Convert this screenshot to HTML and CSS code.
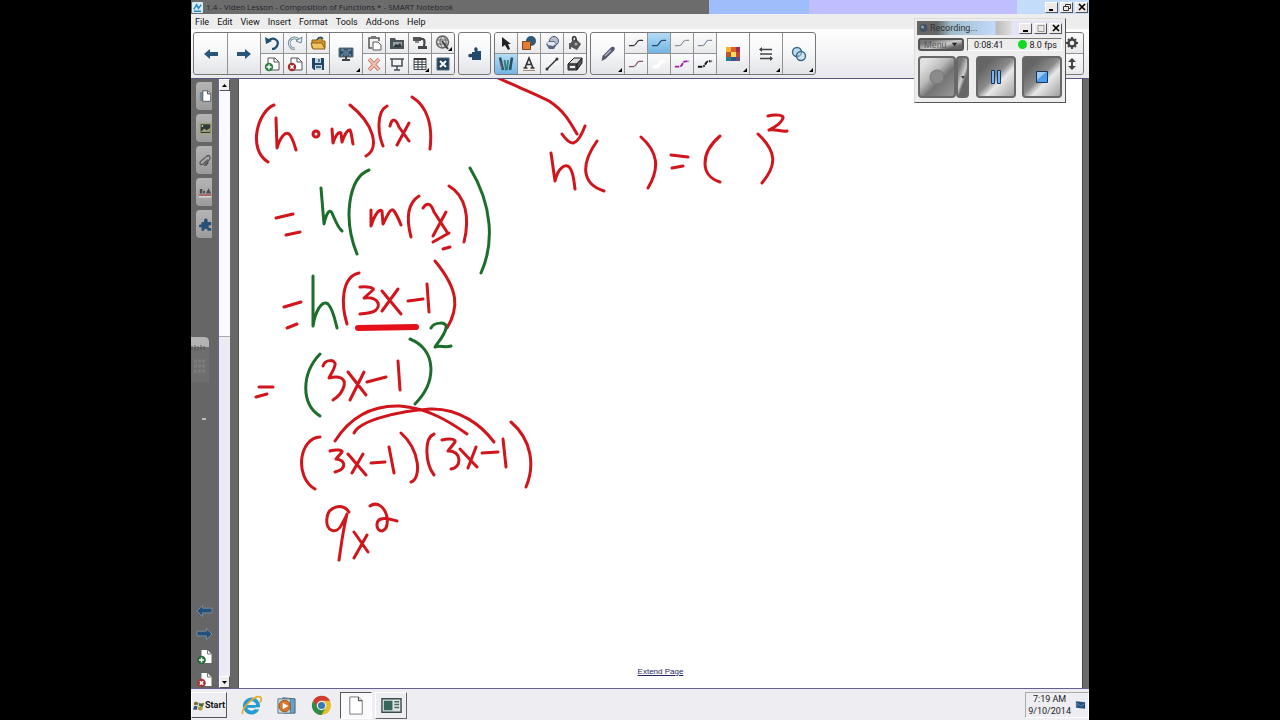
FILE: index.html
```html
<!DOCTYPE html>
<html lang="en">
<head>
<meta charset="utf-8">
<title>1.4 - Video Lesson - Composition of Functions</title>
<link rel="stylesheet" href="styles.css">
</head>
<body>
<div class="desktop">
  <header class="titlebar">
    <svg class="app-icon" viewBox="0 0 12 12"><rect width="12" height="12" rx="1" fill="#d9edf7"/><path d="M2 8l3-5 2 4 3-4M2 10h8" stroke="#2588b8" stroke-width="1.6" fill="none"/></svg>
    <span class="title-text">1.4 - Video Lesson - Composition of Functions * - SMART Notebook</span>
    <div class="win-buttons">
      <button class="win-btn" aria-label="Minimize"><svg viewBox="0 0 12 11"><path d="M3 8h4" stroke="#000" stroke-width="2"/></svg></button>
      <button class="win-btn" aria-label="Restore"><svg viewBox="0 0 12 11"><path d="M4.5 4V2.500h5v4H8M2.500 4.500h5v4h-5z" stroke="#333" fill="none"/></svg></button>
      <button class="win-btn" aria-label="Close"><svg viewBox="0 0 12 11"><path d="M3 2l6 6M9 2L3 8" stroke="#000" stroke-width="1.700"/></svg></button>
    </div>
  </header>

  <nav class="menubar">
    <button>File</button><button>Edit</button><button>View</button><button>Insert</button><button>Format</button><button>Tools</button><button>Add-ons</button><button>Help</button>
  </nav>

  <div class="toolbar">
    <div class="group">
      <button class="big" aria-label="Previous page"><svg viewBox="0 0 16 16"><path d="M1 8l6-5v3h8v4H7v3z" fill="#2b567a"/></svg></button>
      <button class="big" aria-label="Next page"><svg viewBox="0 0 16 16"><path d="M15 8L9 3v3H1v4h8v3z" fill="#2b567a"/></svg></button>
      <div class="cells cols3">
        <button aria-label="Undo"><svg viewBox="0 0 16 16"><path d="M1 2l1 7 6-3z" fill="#1f4e70"/><path d="M4 6c5-5 12-1 9 5-1 2-3 3-5 3" stroke="#1f4e70" stroke-width="2.200" fill="none"/></svg></button>
        <button aria-label="Redo"><svg viewBox="0 0 16 16"><path d="M12 5C7 0 0 5 3 11c1 2 3 3 5 3" stroke="#6b8695" stroke-width="2.600" fill="none"/><path d="M12 5C7 0 0 5 3 11c1 2 3 3 5 3" stroke="#eef4f7" fill="none"/><path d="M15 2l-1 6-5-2z" fill="#eef4f7" stroke="#6b8695"/></svg></button>
        <button aria-label="Open"><svg viewBox="0 0 16 16"><path d="M2 13V5h5l1-2h4v3h3v7z" fill="#d49a29" stroke="#87611f"/><path d="M1 8h11l3 6H3z" fill="#f0c45b" stroke="#87611f"/><path d="M7 5c2-4 5-3 6-1" stroke="#26516e" stroke-width="1.500" fill="none"/></svg></button>
        <button aria-label="Add page"><svg viewBox="0 0 16 16"><path d="M4 2h7l4 4v8H4z" fill="#fff" stroke="#555"/><path d="M10 2v4h5" fill="none" stroke="#555"/><circle cx="5" cy="11" r="4.200" fill="#2f7d42"/><path d="M5 8.500v5M2.500 11h5" stroke="#fff" stroke-width="1.400"/></svg></button>
        <button aria-label="Delete page"><svg viewBox="0 0 16 16"><path d="M4 2h7l4 4v8H4z" fill="#fff" stroke="#555"/><path d="M10 2v4h5" fill="none" stroke="#555"/><circle cx="5" cy="11" r="4.200" fill="#a02c2c"/><path d="M3.300 9.300l3.400 3.400m0-3.400l-3.400 3.400" stroke="#fff" stroke-width="1.300"/></svg></button>
        <button aria-label="Save"><svg viewBox="0 0 16 16"><path d="M2 2h12v12H4l-2-2z" fill="#1f4666"/><path d="M5 2h6v5H5zM5 9h7v5H5z" fill="#c6d5df"/><path d="M9 3v3M6 11h5" stroke="#1f4666" stroke-width="1.300"/></svg></button>
      </div>
      <button class="big more" aria-label="Screen shade"><svg viewBox="0 0 16 16"><path d="M1 2h14v9H1z" fill="#2c4f68" stroke="#67737b"/><path d="M3 4h3M10 4h3M3 9h2M11 9h2" stroke="#9cb8c8"/><circle cx="8" cy="7" r="3" fill="#53778f"/><path d="M4 14h8M8 10v4" stroke="#444" stroke-width="2"/></svg></button>
      <div class="cells cols4">
        <button aria-label="Paste"><svg viewBox="0 0 16 16"><path d="M6 13H3V3h2m5 0h3v3" fill="none" stroke="#555" stroke-width="1.500"/><path d="M5 1h5v3H5z" fill="#777"/><path d="M7 7h5l3 3v5H7z" fill="#fff" stroke="#555"/></svg></button>
        <button aria-label="Gallery"><svg viewBox="0 0 16 16"><path d="M1 3h5l1 2h8v9H1z" fill="#4c5357"/><path d="M4 7h9v5H4z" fill="#93a1a8"/><path d="M4 12l3-3 2 1 2-2 2 4z" fill="#333"/></svg></button>
        <button aria-label="Document camera"><svg viewBox="0 0 16 16"><path d="M1 2h8v4H1z" fill="#555"/><path d="M8 4c5-1 5 2 4 7" stroke="#444" stroke-width="2.200" fill="none"/><path d="M6 11h9v3H6z" fill="#444"/><path d="M3 7h4" stroke="#888" stroke-width="2"/></svg></button>
        <button class="more" aria-label="Web browser"><svg viewBox="0 0 16 16"><circle cx="7.500" cy="7" r="6" fill="#ddd" stroke="#666" stroke-width="1.500"/><path d="M2 5h11M2 9h10M8 1c-4 4-4 8 0 12M8 1c4 4 4 8 0 12" stroke="#666" fill="none"/><path d="M7 6l6 8" stroke="#444" stroke-width="2"/></svg></button>
        <button aria-label="Delete"><svg viewBox="0 0 16 16"><path d="M3 3l10 11M13 3L3 14" stroke="#b9705f" stroke-width="3.500"/><path d="M3 3l10 11M13 3L3 14" stroke="#f3c0b2" stroke-width="2"/></svg></button>
        <button aria-label="Presentation"><svg viewBox="0 0 16 16"><path d="M1 3h14M3 3v7h10V3M8 10v4M5 14h6" fill="none" stroke="#454f55" stroke-width="1.500"/></svg></button>
        <button class="more" aria-label="Table"><svg viewBox="0 0 16 16"><path d="M2 2.500h12v11H2zM2 6h12M2 8.500h12M2 11h12M6 3v10M10 3v10" fill="#fff" stroke="#3c464d"/><path d="M2 3h12" stroke="#333" stroke-width="2"/></svg></button>
        <button aria-label="Hide"><svg viewBox="0 0 16 16"><path d="M2 2h12v12H2z" fill="#21445f" stroke="#567"/><path d="M5 5l6 6M11 5l-6 6" stroke="#fff" stroke-width="2"/></svg></button>
      </div>
    </div>
    <div class="group">
      <button class="big solo" aria-label="Add-ons"><svg viewBox="0 0 16 16"><path d="M5 6h3C5 0 12 0 10.500 5H14v9H5v-3c-5 2-5-5 0-3z" fill="#23486a"/></svg></button>
    </div>
    <div class="group">
      <div class="cells cols4">
        <button aria-label="Select"><svg viewBox="0 0 16 16"><path d="M4 2v10l3-2 3 5 2-1-2-5h3z" fill="#222"/></svg></button>
        <button aria-label="Shapes"><svg viewBox="0 0 16 16"><circle cx="10" cy="6" r="5" fill="#2c5a78"/><path d="M1.500 6.500h8v8h-8z" fill="#e27d31" stroke="#7d481f"/></svg></button>
        <button aria-label="Regular polygons"><svg viewBox="0 0 16 16"><circle cx="10" cy="6" r="4.500" fill="#b5bfd0" stroke="#4b5570"/><path d="M2 9l3-3h5l3 3-3 5H5z" fill="#596585"/><path d="M3 8l2-1h5l2 2-3 2-5-1z" fill="#e3e8f2"/></svg></button>
        <button aria-label="Fill"><svg viewBox="0 0 16 16"><path d="M4 7l5-3 5 5-4 6-6-3z" fill="#555"/><path d="M6 6c-2-6 4-6 3 0M3 8v6" stroke="#333" stroke-width="1.600" fill="none"/><circle cx="9" cy="9" r="1.500" fill="#aaa"/></svg></button>
        <button class="on" aria-label="Pens"><svg viewBox="0 0 16 16"><path d="M2 1.500l3 12.500M14 1.500L12 14" stroke="#2c5260" stroke-width="2.600"/><path d="M6.500 4L8 14.500M10 4l-1 10" stroke="#2f7f77" stroke-width="1.800"/><path d="M2 6l2 6" stroke="#81588d" stroke-width="1.200"/></svg></button>
        <button aria-label="Text"><svg viewBox="0 0 16 16"><path d="M4 12l4-10 4 10M5.500 8.500h5M2.500 12h4M9.500 12h4" fill="none" stroke="#333" stroke-width="1.600"/><path d="M2 14.500h12" stroke="#a98378"/></svg></button>
        <button aria-label="Line"><svg viewBox="0 0 16 16"><path d="M3 13L13 3" stroke="#333" stroke-width="1.500"/><circle cx="3" cy="13" r="1.500" fill="#333"/><circle cx="13" cy="3" r="1.500" fill="#333"/></svg></button>
        <button aria-label="Eraser"><svg viewBox="0 0 16 16"><path d="M1 8l6-6h8l-5 6z" fill="#ddd" stroke="#222"/><path d="M1 8h9v6H1zM10 8l5-6v5l-5 7z" fill="#555" stroke="#222"/><path d="M3 11h5" stroke="#eee" stroke-width="2"/></svg></button>
      </div>
    </div>
    <div class="group">
      <button class="big more" aria-label="Pen type"><svg viewBox="0 0 16 16"><path d="M1.500 15l1-5 9-9c2-1 4 0 3 3l-9 9z" fill="#52566c"/><path d="M5 10l6-6" stroke="#adb3c4" stroke-width="1.500"/></svg></button>
      <div class="cells cols4">
        <button aria-label="Black line"><svg viewBox="0 0 18 16"><path d="M1 11h5c4 0 3-6 7-6h4" fill="none" stroke="#333" stroke-width="1.300"/></svg></button>
        <button class="on" aria-label="Red line"><svg viewBox="0 0 18 16"><path d="M1 11h5c4 0 3-6 7-6h4" fill="none" stroke="#244d6b" stroke-width="1.500"/></svg></button>
        <button aria-label="Blue line"><svg viewBox="0 0 18 16"><path d="M1 11h5c4 0 3-6 7-6h4" fill="none" stroke="#63757a"/></svg></button>
        <button aria-label="Gray line"><svg viewBox="0 0 18 16"><path d="M1 11h5c4 0 3-6 7-6h4" fill="none" stroke="#596780"/></svg></button>
        <button aria-label="Purple line"><svg viewBox="0 0 18 16"><path d="M1 11h5c4 0 3-6 7-6h4" fill="none" stroke="#84506d" stroke-width="1.300"/></svg></button>
        <button aria-label="White line"><svg viewBox="0 0 18 16"><path d="M2 11h4c4 0 3-6 7-6h3" fill="none" stroke="#fff" stroke-width="3.500"/></svg></button>
        <button aria-label="Dashed purple line"><svg viewBox="0 0 18 16"><path d="M1 11h5c4 0 3-6 7-6h4" fill="none" stroke="#9d20ac" stroke-width="2" stroke-dasharray="5 1"/></svg></button>
        <button aria-label="Dashed black line"><svg viewBox="0 0 18 16"><path d="M1 11h5c4 0 3-6 7-6h4" fill="none" stroke="#111" stroke-width="2.200" stroke-dasharray="5 1 2 1"/></svg></button>
      </div>
      <button class="big more" aria-label="Color"><svg viewBox="0 0 16 16"><path d="M1 1h5v5H1z" fill="#f0b32b"/><path d="M6 1h5v5H6z" fill="#de5e32"/><path d="M11 1h4v5h-4z" fill="#963353"/><path d="M1 6h5v5H1z" fill="#b9522f"/><path d="M6 6h5v5H6z" fill="#f1dd62"/><path d="M11 6h4v5h-4z" fill="#c74539"/><path d="M1 11h5v4H1z" fill="#237f8c"/><path d="M6 11h5v4H6z" fill="#355783"/><path d="M11 11h4v4h-4z" fill="#6d4c78"/></svg></button>
      <button class="big more" aria-label="Line style"><svg viewBox="0 0 16 16"><path d="M2 3.500h12M2 8h12M2 12.500h12" stroke="#444" stroke-width="1.400"/><path d="M4 1L1 3.500 4 6M12 10l3 2.500-3 2.500" fill="#444"/></svg></button>
      <button class="big more" aria-label="Transparency"><svg viewBox="0 0 16 16"><circle cx="6" cy="6" r="4.500" fill="#c2dbea" stroke="#356986" stroke-width="1.400"/><circle cx="10" cy="10" r="4.500" fill="#afcddd" fill-opacity=".5" stroke="#356986" stroke-width="1.400"/></svg></button>
    </div>
    <div class="group last">
      <div class="cells cols1">
        <button aria-label="Settings"><svg viewBox="0 0 16 16"><circle cx="8" cy="8" r="3.500" fill="none" stroke="#444" stroke-width="2.500"/><path d="M8 2v2M8 12v2M2 8h2M12 8h2M4 4l1 1M11 11l1 1M12 4l-1 1M5 11l-1 1" stroke="#444" stroke-width="2"/></svg></button>
        <button aria-label="Move toolbar"><svg viewBox="0 0 16 16"><path d="M8 5v6" stroke="#444" stroke-width="2"/><path d="M8 2l4 4H4zM8 14l-4-4h8z" fill="#444"/></svg></button>
      </div>
    </div>
  </div>

  <div class="workspace">
    <aside class="sidebar">
      <div class="tabs">
        <button aria-label="Page sorter"><svg viewBox="0 0 16 16"><path d="M2 3h4v10H2z" fill="#748793"/><path d="M5.500 1.500h6l3 3v9h-9z" fill="#fff" stroke="#46515b"/><path d="M11 2v3h3" fill="none" stroke="#222"/></svg></button>
        <button aria-label="Gallery"><svg viewBox="0 0 16 16"><path d="M2 2h13v12H2z" fill="#2f3b37" stroke="#a5a582" stroke-width="2"/><path d="M3 12l4-4 3 2 4-3v5z" fill="#9a9b78"/><circle cx="5" cy="5" r="1" fill="#ddd"/></svg></button>
        <button aria-label="Attachments"><svg viewBox="0 0 16 16"><path d="M11 7l-5 5c-3 2-5-1-3-3l7-6c3-2 5 1 3 4l-6 7M12 10l-3 4" fill="none" stroke="#555" stroke-width="1.400"/></svg></button>
        <button aria-label="Properties"><svg viewBox="0 0 16 16"><path d="M2 4h3v5H2zM6 6h2v3H6zM9 9l3-6 3 6z" fill="#464d50"/><path d="M1 11h14" stroke="#a54e41" stroke-width="1.500"/><path d="M1 13h14" stroke="#fff"/></svg></button>
        <button aria-label="Add-ons"><svg viewBox="0 0 16 16"><path d="M4 5h3c-1-5 5-5 4 0h4v4c-4-1-4 4 0 3v3h-4c0-3-4-3-4 0H4v-4c-4 1-4-4 0-3z" fill="#284f76"/></svg></button>
      </div>
      <svg class="gadget" viewBox="0 0 20 46"><path d="M0 0h13q5 0 5 5v40H0z" fill="#6e6e6e"/><path d="M0 0h13q5 0 5 5v5H0z" fill="#b4b4b4"/><path d="M1 9v4M4 8v6M7 9v5M10 8v5M13 9v4" stroke="#555"/><path d="M3 24h11M3 29h11M3 34h11" stroke="#7c7c7c" stroke-width="3" stroke-dasharray="3 1"/></svg>
      <i class="dot"></i>
      <div class="page-actions">
        <button aria-label="Previous"><svg viewBox="0 0 18 16"><path d="M1 8l6-6v3h10v5H7v4z" fill="#24517b" stroke="#7b8d9a"/></svg></button>
        <button aria-label="Next"><svg viewBox="0 0 18 16"><path d="M17 8l-6-6v3H1v5h10v4z" fill="#24517b" stroke="#7b8d9a"/></svg></button>
        <button aria-label="Insert page"><svg viewBox="0 0 16 16"><path d="M5 1h6l4 4v9H5z" fill="#fff"/><path d="M11 1v4h4" fill="none" stroke="#777"/><circle cx="5" cy="11" r="4.300" fill="#286b38"/><path d="M5 8.500v5M2.500 11h5" stroke="#fff" stroke-width="1.400"/></svg></button>
        <button aria-label="Remove page"><svg viewBox="0 0 16 16"><path d="M5 1h6l4 4v9H5z" fill="#fff"/><path d="M11 1v4h4" fill="none" stroke="#777"/><circle cx="5" cy="11" r="4.300" fill="#a23535"/><path d="M3.300 9.300l3.400 3.400m0-3.400l-3.400 3.400" stroke="#fff" stroke-width="1.400"/></svg></button>
      </div>
    </aside>
    <div class="scrollbar">
      <button aria-label="Scroll up"><svg viewBox="0 0 11 11"><path d="M3 7l2.500-3L8 7z"/></svg></button>
      <div class="thumb"></div>
      <div class="track"></div>
      <button aria-label="Scroll down"><svg viewBox="0 0 11 11"><path d="M3 4l2.500 3L8 4z"/></svg></button>
    </div>
    <main class="page">
      <svg class="ink" width="842" height="608" viewBox="239 79 842 608" role="img" aria-label="Handwritten composition of functions">
        <g class="red">
          <path d="M274 105C258 111 247 149 268 162M276 118L277 148C280 138 285 131 289 134C293 138 294 144 296 150M332 129L333 143C335 137 338 131 341 133L342 142C344 136 347 129 350 130C352 134 352 140 353 144M350 105C374 124 380 148 366 156M387 106C376 112 378 134 383 146M390 126C392 117 396 119 399 127L409 141M409 123L397 145M412 97C427 106 433 125 430 149"/>
          <circle cx="316" cy="134" r="3"/>
          <path d="M276 218L293 214M286 235L300 232M371 210L371 226C374 216 379 208 382 211L383 224C388 214 391 207 394 211C397 215 399 220 401 225M419 196C408 203 406 218 411 237M423 208C427 202 431 203 434 212L447 232M446 212L433 236M433 242L449 233M443 249L450 247M449 186C466 196 470 218 464 242"/>
          <path d="M284 307L301 302M287 328L297 324M359 273C341 277 341 305 347 324M360 287C368 286 375 288 373 290L364 298C376 296 382 304 376 310C371 314 365 313 360 314M382 291L401 314M398 289L382 311M408 301L423 299M427 284L429 312M435 261C459 290 459 308 447 328"/>
          <path d="M259 387L273 387M256 397L267 394M323 366C325 359 336 359 335 365C334 370 331 374 329 378C340 375 346 379 344 386C342 393 338 397 333 400M348 372L366 395M364 372L350 400M367 382L386 377M398 361L400 390"/>
          <path d="M335 441C349 419 370 405 400 406C428 408 450 422 467 434M354 433C360 420 400 411 430 409C460 408 482 426 494 442"/>
          <path d="M320 437C299 438 294 477 315 489M330 451C336 449 343 450 342 452L336 459C346 460 347 469 335 472M348 454L366 475M363 454L352 473M371 463L385 462M389 447L394 473M401 433C421 451 421 479 411 482M434 434C424 438 425 463 434 475M442 440C449 438 456 439 455 442L448 451C462 450 462 468 451 469M460 449L477 467M476 447L468 468M482 453L498 452M503 439L506 467M511 422C532 440 535 466 526 487"/>
          <path d="M349 512C342 502 328 507 327 518C325 532 337 535 342 524C345 518 347 515 347 514C342 535 341 548 339 560M354 532L368 552M367 535L354 558M370 506C377 501 385 507 387 517C388 525 386 530 382 531C376 531 375 521 381 519C387 517 391 520 397 521"/>
          <path d="M498 78C520 88 536 94 549 101C563 110 569 120 577 134M562 134C571 147 577 147 585 126M551 153L555 181C558 168 566 162 570 168C574 174 574 183 575 189M597 141C580 165 582 184 604 191M641 137C658 152 660 168 648 188M671 155L688 157M672 168L683 166M720 136C700 153 700 176 720 182M758 134C777 152 777 165 762 183M768 116C775 114 784 115 783 118C782 123 775 127 769 130C776 129 782 132 787 131"/>
          <path class="thick" d="M358 328L416 327"/>
        </g>
        <g class="green">
          <path d="M321 188L324 224C326 215 329 208 332 213C335 220 338 228 342 231M369 170C348 178 343 220 357 254M470 168C493 206 494 244 481 273M313 276L313 326C315 312 322 299 328 304C333 309 335 320 337 328M431 328C434 322 448 321 446 328C445 335 438 342 435 347C440 345 446 348 451 346M320 354C301 374 301 404 320 416M410 339C437 350 437 382 415 404"/>
        </g>
      </svg>
      <a class="extend" href="#extend">Extend Page</a>
    </main>
    <div class="gutter"></div>
  </div>

  <footer class="taskbar">
    <button class="start"><svg viewBox="0 0 12 12"><path d="M1 3c2-2 3-1 5 0L5 6C4 5 2 5 1 6z" fill="#8e6b31"/><path d="M7 3c1 1 3 1 5 0l-1 4c-2 1-3 0-5-1z" fill="#466b35"/><path d="M1 7c1-1 3-1 4 0l-1 4c-1-1-3-1-4 0z" fill="#395780"/><path d="M6 7c2 1 3 1 5 0l-1 4c-2 1-3 0-5-1z" fill="#b59b38"/></svg>Start</button>
    <div class="tasks">
      <button aria-label="Internet Explorer"><svg viewBox="0 0 22 22"><circle cx="11" cy="11.500" r="7" fill="none" stroke="#259bd0" stroke-width="4"/><path d="M6 12h13" stroke="#259bd0" stroke-width="3"/><path d="M15 14h6" stroke="#f5f4f8" stroke-width="2"/><path d="M2 20C-1 15 14 0 20 2c2 1 1 4 0 6" fill="none" stroke="#e3ae2c" stroke-width="1.800"/></svg></button>
      <button aria-label="Media player"><svg viewBox="0 0 22 22"><path d="M7 3l13 1v15H8z" fill="#62a5c9" stroke="#4c6674"/><path d="M2 4h13v15H2z" fill="#c0dbe5" stroke="#5f7782"/><circle cx="9" cy="11.500" r="6" fill="#db7528" stroke="#935324"/><path d="M7 8l6 3.500L7 15z" fill="#fff"/></svg></button>
      <button aria-label="Chrome"><svg viewBox="0 0 22 22"><circle cx="11" cy="11" r="10" fill="#e9bd2c"/><path d="M2.300 6A10 10 0 0 1 20 6h-9l-4 7z" fill="#cf3c32"/><path d="M2.300 6A10 10 0 0 0 11 21l4-7-7 0z" fill="#318b47"/><circle cx="11" cy="11" r="5" fill="#eee"/><circle cx="11" cy="11" r="3.700" fill="#387bb0"/></svg></button>
      <button class="task active" aria-label="SMART Notebook"><svg viewBox="0 0 22 22"><path d="M4 2h9l4 4v14H4z" fill="#fff" stroke="#777"/><path d="M13 2v4h4" fill="#ddd" stroke="#333"/></svg></button>
      <button class="task" aria-label="Recorder"><svg viewBox="0 0 22 22"><path d="M1 4h20v14H1z" fill="#dce5e2" stroke="#3a4e4a" stroke-width="1.500"/><path d="M3 6h9v10H3z" fill="#37645d"/><path d="M14 7h5M14 10h5M14 13h5" stroke="#536762" stroke-width="1.500"/></svg></button>
    </div>
    <div class="tray">
      <div class="clock"><span>7:19 AM</span><span>9/10/2014</span></div>
      <svg viewBox="0 0 12 12"><path d="M1 2l10 1v7L1 9z" fill="#24517b"/><path d="M2 9V4l4 3 4-2" fill="none" stroke="#6a8ba7"/></svg>
    </div>
  </footer>

  <section class="recorder" aria-label="Recorder">
    <div class="rec-title">
      <svg viewBox="0 0 12 12"><circle cx="6" cy="6" r="4" fill="#465461"/><circle cx="5" cy="5" r="1.500" fill="#8da0ad"/></svg>
      <span>Recording...</span>
      <div class="win-buttons">
        <button class="win-btn" aria-label="Minimize recorder"><svg viewBox="0 0 12 11"><path d="M3 8h5" stroke="#000" stroke-width="2"/></svg></button>
        <button class="win-btn" aria-label="Maximize recorder"><svg viewBox="0 0 12 11"><path d="M3 2.500h6v6H3z" fill="none" stroke="#999"/></svg></button>
        <button class="win-btn" aria-label="Close recorder"><svg viewBox="0 0 12 11"><path d="M3 2l6 6M9 2L3 8" stroke="#000" stroke-width="1.700"/></svg></button>
      </div>
    </div>
    <div class="rec-status">
      <button class="rec-menu"><span>Menu</span><svg viewBox="0 0 8 8"><path d="M1 2h6L4 6z" fill="#222"/></svg></button>
      <div class="readout"><span>0:08:41</span><span class="fps"><i></i>8.0 fps</span></div>
    </div>
    <div class="rec-controls">
      <div class="rec-pair">
        <button class="metal wide" aria-label="Record"><svg viewBox="0 0 20 20"><circle cx="10" cy="10" r="7" fill="#8b8b8b" stroke="#777"/></svg></button>
        <button class="metal narrow" aria-label="Record options"><svg viewBox="0 0 8 8"><path d="M2 3h4L4 6z" fill="#444"/></svg></button>
      </div>
      <button class="metal" aria-label="Pause"><svg viewBox="0 0 20 20"><path d="M5.500 3.500h3v13h-3zM11.500 3.500h3v13h-3z" fill="#78b7f4" stroke="#17375f"/></svg></button>
      <button class="metal" aria-label="Stop"><svg viewBox="0 0 20 20"><path d="M4.500 4.500h11v11h-11z" fill="#4d9dec" stroke="#17375f"/><path d="M5 5h9L5 13z" fill="#9ccbf6"/></svg></button>
    </div>
  </section>
</div>
</body>
</html>
```
FILE: styles.css
```css
* { box-sizing: border-box; }
body {
  margin: 0;
  background: #000;
  font-family: Roboto, "Liberation Sans", sans-serif;
  font-size: 9px;
  line-height: 12px;
  color: #222;
}
button {
  margin: 0;
  padding: 0;
  border: 0;
  background: none;
  font: inherit;
  color: inherit;
  display: flex;
  align-items: center;
  justify-content: center;
}
svg { display: block; flex: none; }

.desktop {
  position: relative;
  display: flex;
  flex-direction: column;
  min-height: 100vh;
  margin: 0 191px;
  background: #efeff2;
}

/* Title bar */
.titlebar {
  display: flex;
  align-items: center;
  height: 14px;
  padding-left: 1px;
  background: linear-gradient(90deg, #6c6c6c 518px, #9fbcfb 518px 618px, #bfbfff 618px 826px, #c2dcfa 826px);
}
.app-icon { width: 11px; height: 11px; }
.title-text {
  margin-left: 3px;
  font-family: "Open Sans", "Noto Sans", sans-serif;
  font-size: 8px;
  color: #20242c;
  white-space: nowrap;
}
.win-buttons { display: flex; gap: 2px; margin-left: auto; padding-right: 1px; }
.win-btn {
  width: 13px;
  height: 11px;
  background: #ece9e8;
  border: 1px solid;
  border-color: #fff #555 #555 #fff;
}
.win-btn svg { width: 12px; height: 11px; }

/* Menus */
.menubar {
  display: flex;
  gap: 8px;
  height: 15px;
  padding: 0 4px;
  background: #eeedee;
  color: #111;
}

/* Toolbar */
.toolbar {
  display: flex;
  gap: 3px;
  height: 50px;
  padding: 3px 5px 3px 2px;
  background: linear-gradient(#fff, #f4f4f6 50%, #e8e8ed);
  border-bottom: 1px solid #55557d;
}
.group {
  display: flex;
  height: 43px;
  border: 1px solid #777;
  border-radius: 3px;
  overflow: hidden;
  background: linear-gradient(#fff, #f5f6f8 50%, #e2e3e6);
}
.group.last { margin-left: auto; }
.big { position: relative; width: 33px; }
.big.solo { width: 31px; }
.big + .big, .big + .cells, .cells + .big { border-left: 1px solid #929292; }
.big svg { width: 16px; height: 16px; }
.cells { display: grid; gap: 1px; grid-template-rows: 1fr 1fr; background: #929292; }
.cols3 { grid-template-columns: repeat(3, 22px); }
.cols4 { grid-template-columns: repeat(4, 22px); }
.cols1 { grid-template-columns: 22px; }
.cells button { position: relative; background: linear-gradient(#fbfbfc, #e8e9ec); }
.cells button.on { background: linear-gradient(#b4dcf6, #72b5e3); }
.cells svg { width: 16px; height: 16px; }
.more::after {
  content: "";
  position: absolute;
  right: 2px;
  bottom: 2px;
  border: 2px solid;
  border-color: transparent #000 #000 transparent;
}

/* Workspace */
.workspace { display: flex; flex: 1; min-height: 609px; }
.sidebar {
  display: flex;
  flex-direction: column;
  width: 27px;
  background: #666;
}
.tabs { display: flex; flex-direction: column; gap: 4px; padding: 3px 6px 0 5px; }
.tabs button {
  justify-content: flex-end;
  height: 28px;
  background: linear-gradient(#b4b4b4, #9c9c9c);
  border-radius: 4px 0 0 4px;
}
.tabs svg { width: 14px; height: 15px; }
.gadget { width: 20px; height: 46px; margin-top: 99px; }
.dot { width: 4px; height: 2px; margin: 35px 0 0 11px; background: #bbb; }
.page-actions {
  display: flex;
  flex-direction: column;
  align-items: center;
  gap: 7px;
  margin-top: auto;
}
.page-actions svg { width: 17px; height: 16px; }
.scrollbar {
  display: flex;
  flex-direction: column;
  width: 12px;
  background: #ecebf4;
  border-left: 1px solid #65659a;
}
.scrollbar button {
  height: 12px;
  background: #eee;
  border: 1px solid;
  border-color: #fff #555 #555 #fff;
}
.scrollbar svg { width: 11px; height: 11px; }
.thumb { flex: 42; background: #faf9ff; border-bottom: 1px solid #aaa; }
.track { flex: 58; }
.page {
  position: relative;
  display: flex;
  flex: 1;
  align-items: flex-end;
  justify-content: center;
  margin-left: 8px;
  padding-bottom: 10px;
  background: #fff;
  border-left: 1px solid #555;
  overflow: hidden;
  box-shadow: -8px 0 #686868;
}
.ink { position: absolute; left: 0; top: 0; }
.ink path, .ink circle {
  fill: none;
  stroke-width: 3;
  stroke-linecap: round;
  stroke-linejoin: round;
}
.red { stroke: #d0151c; }
.green { stroke: #1d6d2b; }
.ink .thick { stroke: #e5101a; stroke-width: 6; }
.extend {
  position: relative;
  font-family: "Liberation Sans", sans-serif;
  font-size: 8px;
  color: #28285d;
}
.gutter { width: 7px; background: #6b6b6d; border-left: 1px solid #444; }

/* Taskbar */
.taskbar {
  display: flex;
  height: 32px;
  padding-top: 3px;
  background: #eeedf2;
  border-top: 1px solid #625f91;
}
.start {
  gap: 1px;
  width: 36px;
  height: 26px;
  font-weight: 700;
  color: #111;
  border: 1px solid;
  border-color: #fff #555 #555 #fff;
}
.start svg { width: 11px; height: 11px; }
.tasks { display: flex; gap: 3px; margin-left: 8px; }
.tasks button { width: 32px; height: 27px; }
.tasks svg { width: 21px; height: 21px; }
.tasks .task { border: 1px solid; border-color: #fff #666 #666 #fff; }
.tasks .active { background: #faf9fc; border-color: #555 #fff #fff #555; }
.tray {
  display: flex;
  align-items: center;
  gap: 4px;
  height: 26px;
  margin-left: auto;
  padding: 0 2px;
  border: 1px solid;
  border-color: #aaa #fff #fff #aaa;
}
.tray svg { width: 11px; height: 12px; }
.clock { display: flex; flex-direction: column; align-items: center; }

/* Floating recorder window */
.recorder {
  position: absolute;
  right: 23px;
  top: 18px;
  width: 152px;
  height: 85px;
  padding: 2px;
  background: #eeedee;
  border: 1px solid;
  border-color: #ddd #555 #555 #ddd;
}
.rec-title {
  display: flex;
  align-items: center;
  height: 14px;
  background: linear-gradient(90deg, #666 20px, #9ebdcb 34px, #c3dafa 78px, #bbb 79px, #ddd 94px, #e4e4f6 95px);
}
.rec-title > svg { width: 13px; height: 12px; }
.rec-title > span { color: #333; }
.rec-status { display: flex; gap: 3px; margin-top: 3px; padding: 0 1px; }
.rec-menu {
  justify-content: space-between;
  width: 46px;
  height: 13px;
  padding: 0 4px;
  border: 2px solid #555;
  border-radius: 3px;
  background: linear-gradient(165deg, #777 20%, #ccc 55%, #666 80%);
  color: #5c5c5c;
}
.rec-menu svg { width: 7px; height: 7px; }
.readout {
  display: flex;
  flex: 1;
  align-items: center;
  justify-content: space-between;
  height: 13px;
  padding: 0 4px 0 6px;
  border: 1px solid;
  border-color: #777 #fff #fff #777;
}
.fps { display: flex; align-items: center; gap: 2px; }
.fps i { width: 9px; height: 9px; border-radius: 50%; background: #10db22; }
.rec-controls { display: flex; justify-content: space-between; margin-top: 5px; padding: 0 1px; }
.rec-pair { display: flex; }
.metal {
  width: 40px;
  height: 42px;
  border: 2px solid #686868;
  border-radius: 4px;
  background: linear-gradient(135deg, #656565 20%, #8b8b8b 48%, #e8e8e8 62%, #aaa 95%);
}
.metal svg { width: 20px; height: 20px; }
.wide { width: 38px; background: linear-gradient(135deg, #e0e0e0 15%, #bbb 40%, #737373 60%, #979797); }
.narrow { width: 13px; background: linear-gradient(110deg, #777 20%, #ccc 50%, #666 65%); }
.narrow svg { width: 8px; height: 8px; }
```
